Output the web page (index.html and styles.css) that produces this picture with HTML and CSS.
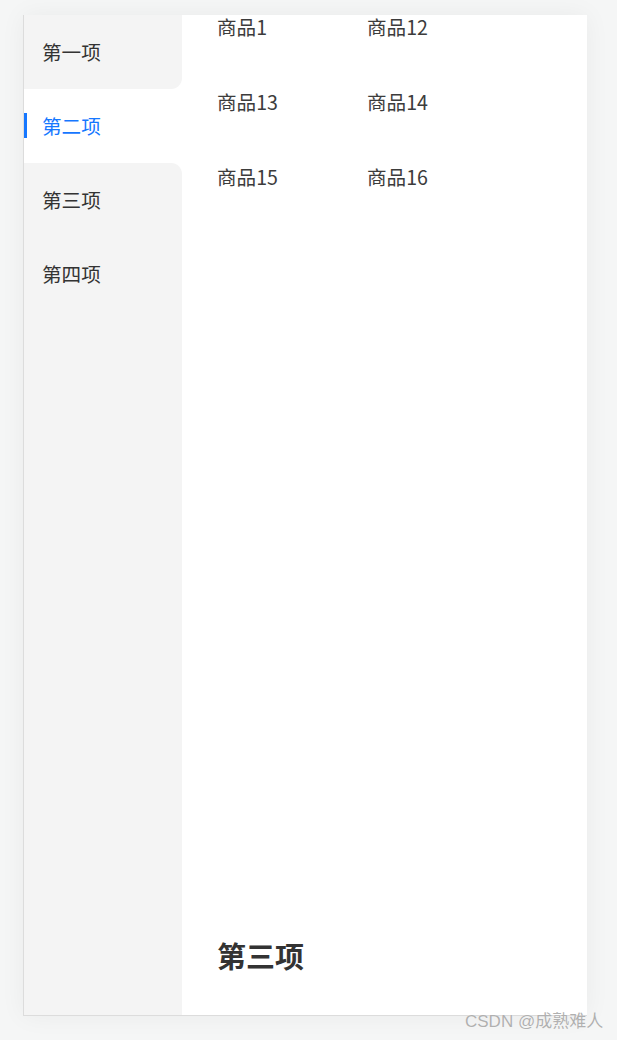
FILE: index.html
```
<!DOCTYPE html>
<html lang="zh">
<head>
<meta charset="utf-8">
<title>分类</title>
<link rel="stylesheet" href="styles.css">
</head>
<body>
<div class="page">
  <div class="panel">
    <ul class="side">
      <li class="side-item before-active">第一项</li>
      <li class="side-item active">第二项</li>
      <li class="side-item after-active">第三项</li>
      <li class="side-item">第四项</li>
      <li class="side-fill"></li>
    </ul>
    <div class="main">
      <div class="goods">
        <div class="good">商品1</div>
        <div class="good">商品12</div>
        <div class="good">商品13</div>
        <div class="good">商品14</div>
        <div class="good">商品15</div>
        <div class="good">商品16</div>
      </div>
      <h2 class="section-title">第三项</h2>
    </div>
  </div>
  <div class="watermark">CSDN @成熟难人</div>
</div>
</body>
</html>
```
FILE: styles.css
```
html, body {
  margin: 0;
  padding: 0;
}
body {
  background: #f5f6f6;
  font-family: "Noto Sans CJK SC", "Liberation Sans", sans-serif;
  color: #333;
}
.page {
  position: relative;
  width: 617px;
  height: 1040px;
  padding-top: 15px;
  box-sizing: border-box;
  overflow: hidden;
}
.panel {
  margin-left: 23px;
  width: 564px;
  height: 1001px;
  box-sizing: border-box;
  border-left: 1px solid #dcdcdc;
  border-bottom: 1px solid #dcdcdc;
  background: #fff;
  box-shadow: 0 0 24px rgba(0, 0, 0, 0.05);
  display: flex;
}
.side {
  list-style: none;
  margin: 0;
  padding: 0;
  width: 158px;
  flex: none;
  display: flex;
  flex-direction: column;
  background: #fff;
}
.side-item {
  position: relative;
  height: 74px;
  line-height: 74px;
  padding-left: 18px;
  font-size: 19.6px;
  color: #333;
  background: #f4f4f4;
}
.side-item.before-active {
  border-bottom-right-radius: 11px;
}
.side-item.after-active {
  border-top-right-radius: 11px;
}
.side-item.active {
  background: #fff;
  color: #1677ff;
}
.side-item.active::before {
  content: "";
  position: absolute;
  left: 0;
  top: 24px;
  width: 3px;
  height: 25px;
  background: #1677ff;
}
.side-fill {
  flex: 1;
  background: #f4f4f4;
}
.main {
  flex: 1;
  padding-left: 35px;
  display: flex;
  flex-direction: column;
}
.goods {
  margin-top: -25px;
  display: grid;
  grid-template-columns: 150px 150px;
}
.good {
  padding: 25px 0 26px;
  line-height: 24px;
  font-size: 19.6px;
  color: #3c3c3c;
}
.section-title {
  margin: 720px 0 0 0;
  height: 40px;
  line-height: 40px;
  font-size: 29px;
  font-weight: bold;
  color: #333;
}
.watermark {
  position: absolute;
  left: 465px;
  top: 1011px;
  font-size: 17px;
  line-height: 22px;
  color: #b0b0b0;
  font-family: "Liberation Sans", "Noto Sans CJK SC", sans-serif;
  text-shadow: 0 0 1px #fff;
}
```
